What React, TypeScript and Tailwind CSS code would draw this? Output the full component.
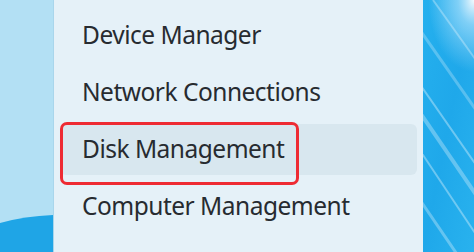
const items = ['Device Manager', 'Network Connections', 'Disk Management', 'Computer Management'];

function Wallpaper() {
  return (
    <svg className="h-full w-full" viewBox="0 0 51 252" preserveAspectRatio="none">
      <defs>
        <linearGradient id="wp" x1="0" y1="0" x2="1" y2="1">
          <stop offset="0" stopColor="#25b0ee" />
          <stop offset="0.5" stopColor="#1fa8ea" />
          <stop offset="1" stopColor="#29b2ee" />
        </linearGradient>
        <radialGradient id="glow" cx="1" cy="0" r="0.9">
          <stop offset="0" stopColor="#ffffff" stopOpacity="0.95" />
          <stop offset="0.35" stopColor="#bfe9ff" stopOpacity="0.6" />
          <stop offset="1" stopColor="#bfe9ff" stopOpacity="0" />
        </radialGradient>
      </defs>
      <rect width="51" height="252" fill="url(#wp)" />
      <rect width="51" height="80" fill="url(#glow)" />
      <g stroke="#ffffff" fill="none">
        <line x1="-10" y1="20" x2="60" y2="120" strokeOpacity="0.25" strokeWidth="3" />
        <line x1="-20" y1="60" x2="60" y2="175" strokeOpacity="0.35" strokeWidth="2" />
        <line x1="-15" y1="95" x2="60" y2="205" strokeOpacity="0.3" strokeWidth="4" />
        <line x1="-10" y1="140" x2="60" y2="245" strokeOpacity="0.35" strokeWidth="2" />
        <line x1="-20" y1="175" x2="55" y2="285" strokeOpacity="0.3" strokeWidth="3" />
        <line x1="10" y1="0" x2="60" y2="70" strokeOpacity="0.3" strokeWidth="2" />
      </g>
    </svg>
  );
}

export default function App() {
  return (
    <div className="relative flex h-[252px] w-[474px] overflow-hidden font-['Noto_Sans',sans-serif]">
      <div className="h-full w-[53px] bg-[#b3e0f4]">
        <svg className="h-full w-full" viewBox="0 0 53 252">
          <path d="M0 223 Q25 216 53 215 L53 252 L0 252 Z" fill="#1fa5e6" />
        </svg>
      </div>

      <div className="flex h-full w-[370px] flex-col gap-[6px] border-l border-[#a9d6ec] bg-[#e5f1f8] px-[6px] pt-[10px]">
        {items.map((label) => (
          <div
            key={label}
            className={`flex h-[51px] shrink-0 items-center rounded-[6px] pl-[22px] text-[24.5px] tracking-[-0.5px] text-[#272b30] ${
              label === 'Disk Management' ? 'bg-[#d8e7ef]' : ''
            }`}
          >
            {label}
          </div>
        ))}
      </div>

      <div className="h-full flex-1">
        <Wallpaper />
      </div>

      <div className="absolute left-[60px] top-[122px] h-[63px] w-[239px] rounded-[7px] border-[3px] border-[#ee2b33]" />
    </div>
  );
}
